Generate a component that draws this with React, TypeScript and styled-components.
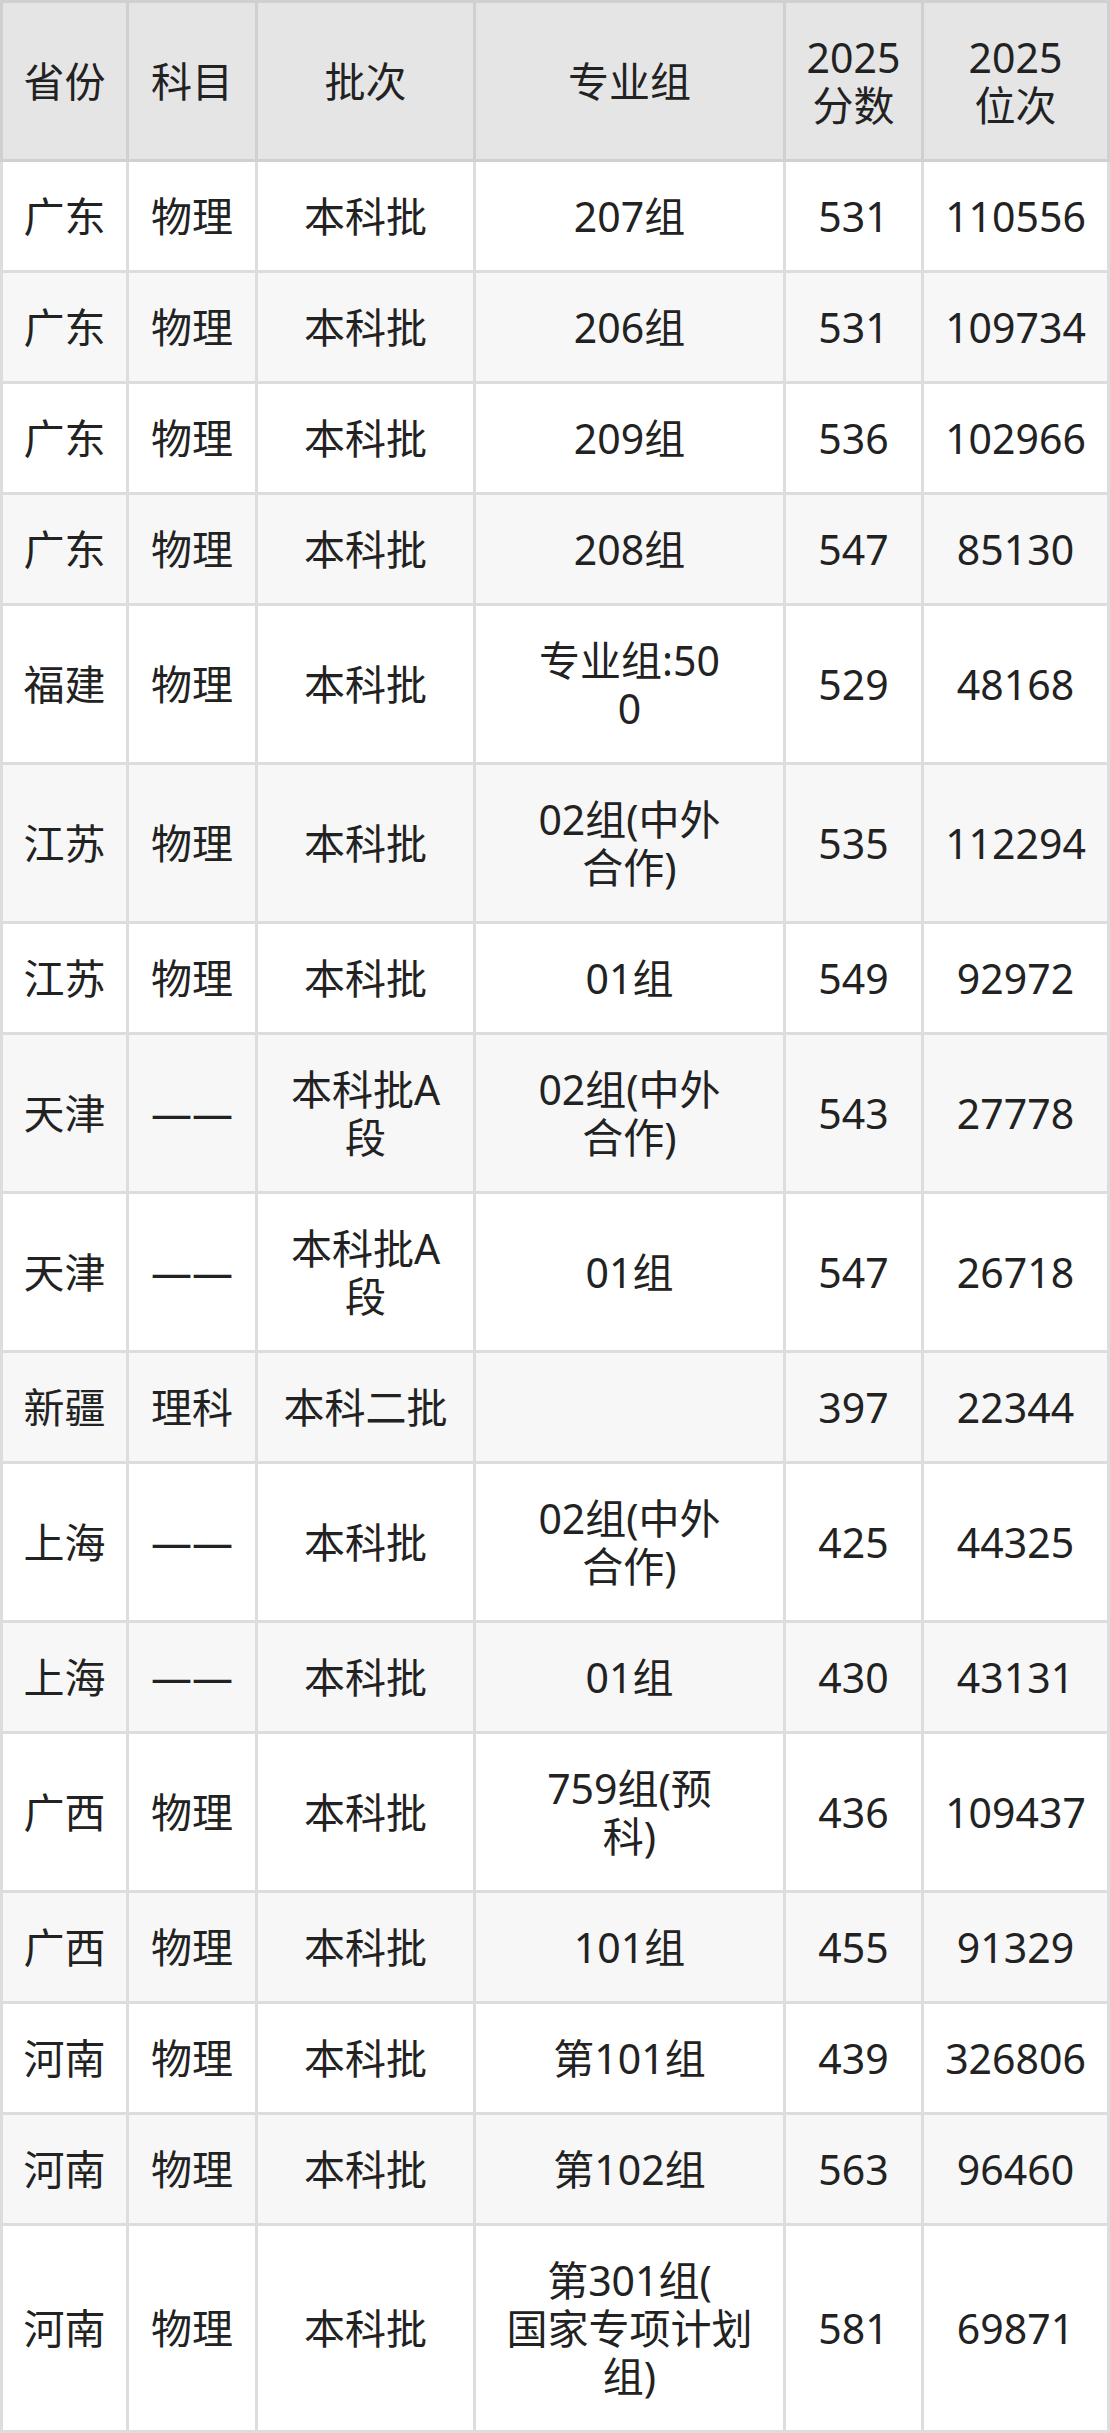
import React from "react";
import styled, { createGlobalStyle } from "styled-components";

const GlobalStyle = createGlobalStyle`
  html, body {
    margin: 0;
    padding: 0;
    background: #ffffff;
  }
  body {
    font-family: "Noto Sans", "Noto Sans CJK SC", sans-serif;
    color: #222222;
  }
`;

const Table = styled.table`
  width: 1110px;
  table-layout: fixed;
  border-collapse: separate;
  border-spacing: 0;
  font-size: 41px;
  line-height: 48px;
  color: #222222;
`;

const HeadCell = styled.th<{ $w: number; $first?: boolean }>`
  box-sizing: border-box;
  width: ${(p) => p.$w}px;
  background: #e5e5e5;
  font-weight: 400;
  text-align: center;
  vertical-align: middle;
  padding: 30px 0;
  border-top: 3px solid #d0d0d0;
  border-right: 3px solid #d0d0d0;
  border-bottom: 3px solid #d0d0d0;
  border-left: ${(p) => (p.$first ? "3px solid #d0d0d0" : "none")};
  white-space: nowrap;
`;

const Row = styled.tr<{ $alt: boolean }>`
  background: ${(p) => (p.$alt ? "#f7f7f7" : "#ffffff")};
`;

const Cell = styled.td<{ $first?: boolean }>`
  box-sizing: border-box;
  text-align: center;
  vertical-align: middle;
  padding: 30px 0;
  border-right: 3px solid #dddddd;
  border-bottom: 3px solid #dddddd;
  border-left: ${(p) => (p.$first ? "3px solid #dddddd" : "none")};
  white-space: nowrap;
`;

const Line = styled.span`
  display: block;
`;

const columns: { w: number; label: string[] }[] = [
  { w: 129, label: ["省份"] },
  { w: 129, label: ["科目"] },
  { w: 218, label: ["批次"] },
  { w: 310, label: ["专业组"] },
  { w: 138, label: ["2025", "分数"] },
  { w: 186, label: ["2025", "位次"] },
];

type Value = string | string[];

const rows: Value[][] = [
  ["广东", "物理", "本科批", "207组", "531", "110556"],
  ["广东", "物理", "本科批", "206组", "531", "109734"],
  ["广东", "物理", "本科批", "209组", "536", "102966"],
  ["广东", "物理", "本科批", "208组", "547", "85130"],
  ["福建", "物理", "本科批", ["专业组:50", "0"], "529", "48168"],
  ["江苏", "物理", "本科批", ["02组(中外", "合作)"], "535", "112294"],
  ["江苏", "物理", "本科批", "01组", "549", "92972"],
  ["天津", "——", ["本科批A", "段"], ["02组(中外", "合作)"], "543", "27778"],
  ["天津", "——", ["本科批A", "段"], "01组", "547", "26718"],
  ["新疆", "理科", "本科二批", "", "397", "22344"],
  ["上海", "——", "本科批", ["02组(中外", "合作)"], "425", "44325"],
  ["上海", "——", "本科批", "01组", "430", "43131"],
  ["广西", "物理", "本科批", ["759组(预", "科)"], "436", "109437"],
  ["广西", "物理", "本科批", "101组", "455", "91329"],
  ["河南", "物理", "本科批", "第101组", "439", "326806"],
  ["河南", "物理", "本科批", "第102组", "563", "96460"],
  ["河南", "物理", "本科批", ["第301组(", "国家专项计划", "组)"], "581", "69871"],
];

const renderValue = (v: Value) => {
  const lines = Array.isArray(v) ? v : [v];
  if (lines.length === 1 && lines[0] === "") return <Line>&nbsp;</Line>;
  return lines.map((l, i) => <Line key={i}>{l}</Line>);
};

export default function App() {
  return (
    <>
      <GlobalStyle />
      <Table>
        <thead>
          <tr>
            {columns.map((c, i) => (
              <HeadCell key={i} $w={c.w} $first={i === 0}>
                {c.label.map((l, j) => (
                  <Line key={j}>{l}</Line>
                ))}
              </HeadCell>
            ))}
          </tr>
        </thead>
        <tbody>
          {rows.map((r, i) => (
            <Row key={i} $alt={i % 2 === 1}>
              {r.map((v, j) => (
                <Cell key={j} $first={j === 0}>
                  {renderValue(v)}
                </Cell>
              ))}
            </Row>
          ))}
        </tbody>
      </Table>
    </>
  );
}
